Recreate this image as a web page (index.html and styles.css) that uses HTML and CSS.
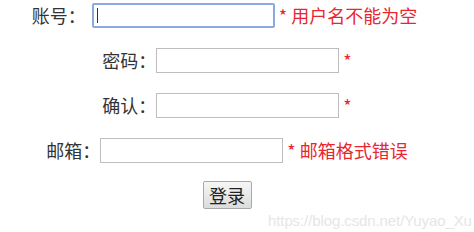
FILE: index.html
```html
<!DOCTYPE html>
<html lang="zh-CN">
<head>
    <meta charset="UTF-8">
    <title>注册</title>
    <link rel="stylesheet" href="styles.css">
</head>
<body>

    <!-- Register form -->
    <form class="reg-form">
        <div class="row first">
            <label class="lbl">账号：</label>
            <span class="field-wrap">
                <input class="field focused" type="text">
                <span class="caret"></span>
            </span>
            <span class="tip">&nbsp;* 用户名不能为空</span>
        </div>
        <div class="row">
            <label class="lbl">密码：</label>
            <input class="field" type="password">
            <span class="tip">&nbsp;*</span>
        </div>
        <div class="row">
            <label class="lbl">确认：</label>
            <input class="field" type="password">
            <span class="tip">&nbsp;*</span>
        </div>
        <div class="row">
            <label class="lbl">邮箱：</label>
            <input class="field" type="text">
            <span class="tip">&nbsp;* 邮箱格式错误</span>
        </div>
        <div class="row btn-row">
            <button type="button" class="login-btn">登录</button>
        </div>
    </form>

    <div class="watermark">https://blog.csdn.net/Yuyao_Xu</div>

</body>
</html>
```

FILE: styles.css
```css
* {
    margin: 0;
    padding: 0;
    box-sizing: border-box;
}

body {
    font-family: "Noto Sans CJK SC", "Liberation Sans", sans-serif;
    background: #fff;
    color: #333;
    width: 474px;
    height: 232px;
    position: relative;
    overflow: hidden;
}

.reg-form {
    width: 454px;
    padding-top: 3px;
}

.row {
    height: 25px;
    margin-bottom: 20px;
    display: flex;
    justify-content: center;
    align-items: center;
    font-size: 18px;
    white-space: nowrap;
}

.row.first {
    padding-right: 5px;
}

.lbl {
    line-height: 25px;
}

.row.first .lbl {
    margin-right: 6px;
}

.field-wrap {
    position: relative;
    display: flex;
}

.field {
    width: 183px;
    height: 25px;
    border: 1px solid #bdbdbd;
    background: #fff;
    outline: none;
    font-size: 14px;
    padding: 0 4px;
}

.field.focused {
    border: 2px solid #8aa9e0;
    border-radius: 2px;
}

.caret {
    position: absolute;
    left: 5px;
    top: 5px;
    width: 1px;
    height: 15px;
    background: #333;
}

.tip {
    color: #e8262f;
    line-height: 25px;
}

.btn-row {
    height: 28px;
    margin-top: -2px;
}

.login-btn {
    width: 49px;
    height: 28px;
    font-family: "Noto Sans CJK SC", sans-serif;
    font-size: 18px;
    color: #222;
    border: 1px solid #a9a9a9;
    border-radius: 2px;
    background: linear-gradient(#f6f6f6, #dcdcdc);
    line-height: 26px;
}

.watermark {
    position: absolute;
    left: 268px;
    top: 212px;
    font-family: "Liberation Sans", Arial, sans-serif;
    font-size: 15px;
    color: #e6e6e6;
    letter-spacing: -0.1px;
}
```
